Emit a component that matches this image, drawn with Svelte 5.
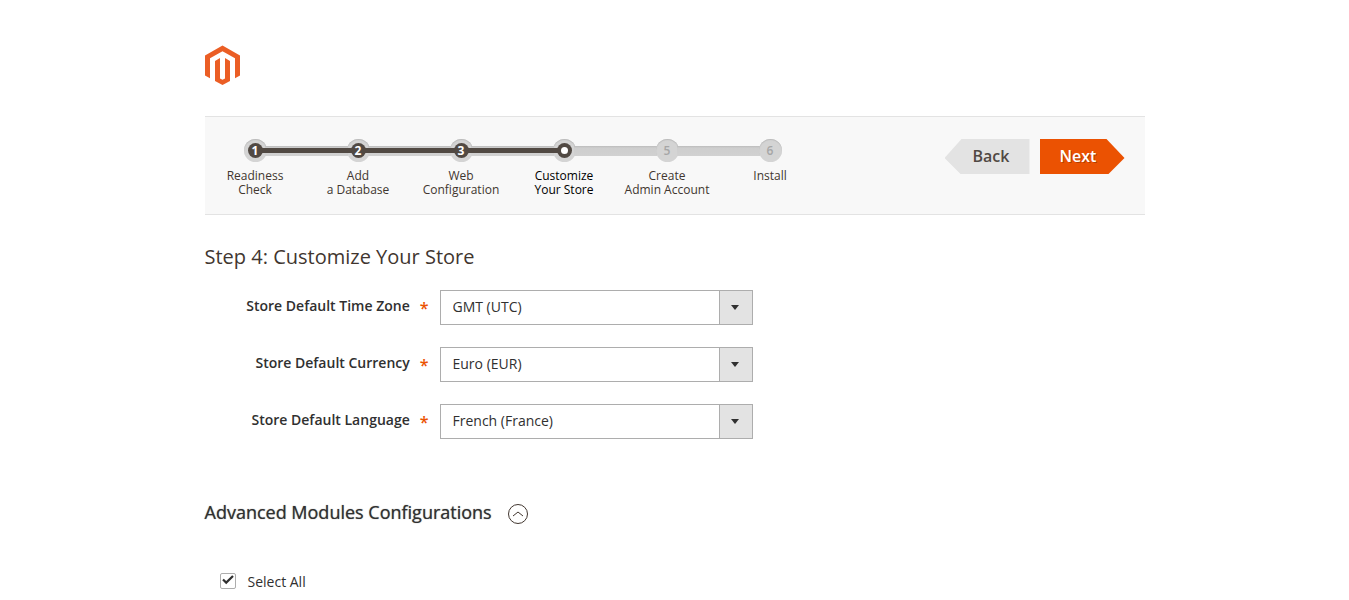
<script>
  const steps = [
    { number: 1, lines: ['Readiness', 'Check'], state: 'done' },
    { number: 2, lines: ['Add', 'a Database'], state: 'done' },
    { number: 3, lines: ['Web', 'Configuration'], state: 'done' },
    { number: 4, lines: ['Customize', 'Your Store'], state: 'active' },
    { number: 5, lines: ['Create', 'Admin Account'], state: 'todo' },
    { number: 6, lines: ['Install'], state: 'todo' }
  ];

  const fields = [
    { id: 'timezone', label: 'Store Default Time Zone', options: ['GMT (UTC)'] },
    { id: 'currency', label: 'Store Default Currency', options: ['Euro (EUR)'] },
    { id: 'language', label: 'Store Default Language', options: ['French (France)'] }
  ];

  let expanded = $state(true);
  let selectAll = $state(true);
</script>

<div class="container">
  <header>
    <svg class="logo" viewBox="0 0 36 40" role="img" aria-label="Magento">
      <path
        fill="#eb5e25"
        d="M17.5 0.5 L35 10.5 V30.4 L30 33.2 V13.3 L17.5 6.2 L5 13.3 V33.2 L0 30.4 V10.5 Z"
      />
      <path
        fill="#eb5e25"
        d="M15 13 V33.4 L17.5 34.8 L20 33.4 V13 L25 15.9 V36 L17.5 40 L10 36 V15.9 Z"
      />
    </svg>
  </header>

  <nav class="wizard">
    <ol class="steps">
      {#each steps as step}
        <li class={step.state}>
          <span class="dot"><span class="core">{#if step.state !== 'active'}{step.number}{/if}</span></span>
          <a href="#step-{step.number}">
            {#each step.lines as line}<span class="line">{line}</span>{/each}
          </a>
        </li>
      {/each}
    </ol>
    <div class="actions">
      <button type="button" class="back">Back</button>
      <button type="button" class="next">Next</button>
    </div>
  </nav>

  <main>
    <h1>Step 4: Customize Your Store</h1>
    <form>
      {#each fields as field}
        <div class="field">
          <label for={field.id}>{field.label}<span class="required">*</span></label>
          <select id={field.id}>
            {#each field.options as option}<option>{option}</option>{/each}
          </select>
        </div>
      {/each}

      <h2>
        <button type="button" class="toggle" aria-expanded={expanded} onclick={() => (expanded = !expanded)}>
          Advanced Modules Configurations
          <svg class:closed={!expanded} viewBox="0 0 22 22" fill="none" stroke="#41362f" aria-hidden="true">
            <circle cx="11" cy="11" r="9.5" />
            <path d="M6 13 L11 9 L16 13" />
          </svg>
        </button>
      </h2>

      {#if expanded}
        <div class="check">
          <input id="select-all" type="checkbox" bind:checked={selectAll} />
          <label for="select-all">Select All</label>
        </div>
      {/if}
    </form>
  </main>
</div>

<style>
  :global(body) {
    margin: 0;
    background: #fff;
  }

  .container {
    max-width: 940px;
    margin: 0 auto;
    color: #303030;
    font: 14px/20px 'Open Sans', sans-serif;
  }

  header {
    padding: 45px 0 31px;
  }

  .logo {
    display: block;
    width: 36px;
    height: 40px;
  }

  .wizard {
    display: flex;
    justify-content: space-between;
    align-items: flex-start;
    padding: 22px 20px 17px 0;
    background: #f8f8f8;
    border-top: 1px solid #e3e3e3;
    border-bottom: 1px solid #e3e3e3;
  }

  .steps {
    display: grid;
    grid-template-columns: repeat(6, 103px);
    margin: 0 0 0 -1px;
    padding: 0;
    list-style: none;
    font-size: 12px;
    line-height: 14px;
    text-align: center;
  }

  li {
    position: relative;
    display: flex;
    flex-direction: column;
    align-items: center;
  }

  .dot {
    display: flex;
    align-items: center;
    justify-content: center;
    width: 23px;
    height: 23px;
    border-radius: 50%;
    background: #d4d4d4;
    box-shadow: inset 0 1px 1px #bbb;
  }

  .core {
    position: relative;
    z-index: 2;
    display: flex;
    align-items: center;
    justify-content: center;
    width: 15px;
    height: 15px;
    border-radius: 50%;
    color: #a6a6a6;
    font-weight: 600;
  }

  .done .core,
  .active .core {
    background: #514943;
    color: #fff;
    font-weight: 700;
  }

  .active .core::after {
    content: '';
    width: 7px;
    height: 7px;
    border-radius: 50%;
    background: #fff;
  }

  /* Track segments that join each step to the next one. */
  li:not(:last-child)::before {
    content: '';
    position: absolute;
    top: 7px;
    left: calc(50% + 10px);
    width: calc(100% - 20px);
    height: 10px;
    background: linear-gradient(#bcbcbc, #cecece 2px, #d1d1d1);
  }

  .done::after {
    content: '';
    position: absolute;
    z-index: 1;
    top: 9px;
    left: 50%;
    width: 100%;
    height: 5px;
    background: #514943;
  }

  li a {
    margin-top: 7px;
    color: #41362f;
    text-decoration: none;
  }

  .active a {
    color: #000;
  }

  .line {
    display: block;
  }

  .actions {
    display: flex;
    gap: 10px;
  }

  .actions button {
    width: 85px;
    height: 35px;
    border: 0;
    font: 600 16px/20px 'Open Sans', sans-serif;
  }

  .actions .back {
    padding: 0 0 2px 8px;
    background: #e3e3e3;
    color: #514943;
    clip-path: polygon(0 54%, 17px 0, 100% 0, 100% 100%, 16px 100%);
  }

  .actions .next {
    padding: 0 8px 2px 0;
    background: #eb5202;
    color: #fff;
    text-shadow: 1px 1px 0 rgba(0, 0, 0, 0.25);
    clip-path: polygon(0 0, 67px 0, 100% 54%, 69px 100%, 0 100%);
  }

  h1 {
    margin: 28px 0 19px;
    font-size: 20px;
    line-height: 28px;
    font-weight: 400;
    color: #41362f;
  }

  .field {
    display: grid;
    grid-template-columns: 25% 33.33%;
    margin-bottom: 22px;
  }

  .field label {
    display: flex;
    justify-content: flex-end;
    gap: 10px;
    padding: 6px 11px 0 0;
    font-weight: 600;
  }

  .required {
    padding-top: 2px;
    color: #eb5202;
    font-size: 16px;
    font-weight: 600;
  }

  select {
    appearance: none;
    width: 100%;
    height: 35px;
    padding: 0 40px 2px 12px;
    border: 1px solid #adadad;
    border-radius: 0;
    color: #303030;
    font: 14px/20px 'Open Sans', sans-serif;
    background:
      url("data:image/svg+xml,%3Csvg xmlns='http://www.w3.org/2000/svg' width='8' height='5'%3E%3Cpath fill='%23303030' d='M0 0h8L4 5z'/%3E%3C/svg%3E")
        no-repeat right 13px center,
      linear-gradient(#e3e3e3, #e3e3e3) no-repeat right / 32px 100%,
      linear-gradient(#adadad, #adadad) no-repeat right / 33px 100%,
      #fff;
  }

  h2 {
    margin: 59px 0 46px;
  }

  .toggle {
    display: flex;
    align-items: center;
    gap: 15px;
    padding: 0;
    border: 0;
    background: none;
    color: #303030;
    font: 400 18px/28px 'Open Sans', sans-serif;
    text-shadow: 0 0 1px rgba(48, 48, 48, 0.7);
  }

  .toggle svg {
    width: 22px;
    height: 22px;
    margin-top: 4px;
  }

  .toggle svg.closed {
    transform: rotate(180deg);
  }

  .check {
    display: flex;
    align-items: center;
    gap: 12px;
    padding-left: 15px;
  }

  .check input {
    appearance: none;
    width: 16px;
    height: 16px;
    margin: 0 0 2px;
    border: 1px solid #adadad;
    border-radius: 2px;
    background: #fff;
  }

  .check input:checked {
    background: url("data:image/svg+xml,%3Csvg xmlns='http://www.w3.org/2000/svg' width='12' height='10'%3E%3Cpath fill='none' stroke='%23303030' stroke-width='2.2' d='M1 4.5L4.2 7.6L11 1'/%3E%3C/svg%3E")
      no-repeat 1px 1px #fff;
  }
</style>
